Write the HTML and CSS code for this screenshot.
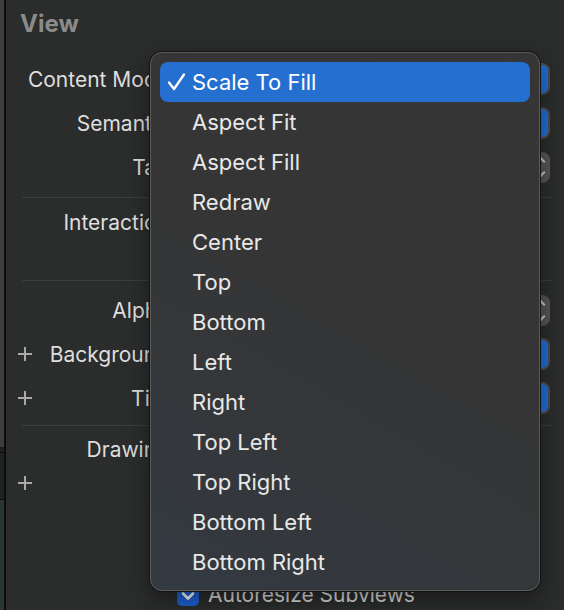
FILE: index.html
```html
<!DOCTYPE html>
<html>
<head>
<meta charset="utf-8">
<link rel="stylesheet" href="styles.css">
</head>
<body>
<div class="app">
  <div class="edge">
    <div class="edge-top"></div>
    <div class="edge-mid"></div>
    <div class="edge-bot"></div>
  </div>
  <div class="inspector">
    <div class="title">View</div>

    <div class="row"><div class="label">Content Mode</div><div class="control"><div class="popup"><div class="popup-arrow"></div></div></div></div>
    <div class="row"><div class="label">Semantic</div><div class="control"><div class="popup"><div class="popup-arrow"></div></div></div></div>
    <div class="row"><div class="label">Tag</div><div class="control"><div class="field"><div class="stepper"><span class="chev up"></span><span class="chev down"></span></div></div></div></div>

    <div class="sep"></div>

    <div class="block">
      <div class="row short"><div class="label">Interaction</div><div class="control"></div></div>
    </div>

    <div class="sep"></div>

    <div class="row tight"><div class="label">Alpha</div><div class="control"><div class="field"><div class="stepper"><span class="chev up"></span><span class="chev down"></span></div></div></div></div>
    <div class="row"><div class="label"><span class="plus"></span><span>Background</span></div><div class="control"><div class="popup"><div class="popup-arrow"></div></div></div></div>
    <div class="row"><div class="label"><span class="plus"></span><span>Tint</span></div><div class="control"><div class="popup"><div class="popup-arrow"></div></div></div></div>

    <div class="sep sep-small"></div>

    <div class="row drawing"><div class="label">Drawing</div><div class="control"></div></div>
    <div class="row plusrow"><div class="label"><span class="plus"></span><span></span></div><div class="control"></div></div>

    <div class="row autoresize"><div class="label"></div><div class="control"><span class="checkbox"><svg width="22" height="22" viewBox="0 0 22 22"><path d="M6 9.5 L11 14.5 L16 9.5" fill="none" stroke="#fff" stroke-width="2.6" stroke-linecap="round" stroke-linejoin="round"/></svg></span><span class="cb-text">Autoresize Subviews</span></div></div>
  </div>
</div>

<div class="menu">
  <div class="item selected"><span class="check"><svg width="20" height="20" viewBox="0 0 20 20"><path d="M2 10.5 L7 17 L17 2.5" fill="none" stroke="#fff" stroke-width="2.3" stroke-linecap="round" stroke-linejoin="round"/></svg></span><span>Scale To Fill</span></div>
  <div class="item"><span class="check"></span><span>Aspect Fit</span></div>
  <div class="item"><span class="check"></span><span>Aspect Fill</span></div>
  <div class="item"><span class="check"></span><span>Redraw</span></div>
  <div class="item"><span class="check"></span><span>Center</span></div>
  <div class="item"><span class="check"></span><span>Top</span></div>
  <div class="item"><span class="check"></span><span>Bottom</span></div>
  <div class="item"><span class="check"></span><span>Left</span></div>
  <div class="item"><span class="check"></span><span>Right</span></div>
  <div class="item"><span class="check"></span><span>Top Left</span></div>
  <div class="item"><span class="check"></span><span>Top Right</span></div>
  <div class="item"><span class="check"></span><span>Bottom Left</span></div>
  <div class="item"><span class="check"></span><span>Bottom Right</span></div>
</div>
</body>
</html>
```

FILE: styles.css
```css
* { box-sizing: border-box; }
html, body {
  margin: 0;
  padding: 0;
  width: 564px;
  height: 610px;
  overflow: hidden;
  background: #2b2c2c;
  font-family: "Inter", "Liberation Sans", sans-serif;
}
.app {
  display: flex;
  height: 610px;
}
.edge {
  width: 6px;
  border-right: 2px solid #0c0c0c;
  display: flex;
  flex-direction: column;
}
.edge-top { height: 447px; background: #3d3d3d; }
.edge-mid {
  height: 53px;
  background: #212322;
  border-top: 5px solid #1d1f1e;
  border-bottom: 1px solid #0c0c0c;
  box-shadow: inset 0 1px 0 #0c0c0c;
}
.edge-bot { flex: 1; background: #28382e; }

.inspector {
  flex: 1;
  padding: 0 14px 0 16px;
  display: flex;
  flex-direction: column;
}
.title {
  height: 48px;
  line-height: 48px;
  margin-left: -2px;
  margin-bottom: 9px;
  font-size: 24px;
  font-weight: 700;
  color: #8b8b8b;
}
.row {
  display: grid;
  grid-template-columns: 147px 1fr;
  column-gap: 6px;
  align-items: center;
  height: 44px;
}
.row.short { height: 32px; }
.row.tight { height: 43px; }
.row.drawing { height: 46px; }
.row.plusrow { height: 22px; }
.row.autoresize { margin-top: 88px; height: 22px; }
.label {
  display: flex;
  justify-content: space-between;
  align-items: center;
  text-align: right;
  font-size: 21px;
  color: #dedede;
  white-space: nowrap;
}
.label:not(:has(.plus)) { justify-content: flex-end; }
.plus {
  position: relative;
  width: 14px;
  height: 14px;
  margin-left: -4px;
  flex: none;
}
.plus::before, .plus::after {
  content: "";
  position: absolute;
  background: #a9a9a9;
}
.plus::before { left: 0; top: 6px; width: 14px; height: 2px; }
.plus::after { left: 6px; top: 0; width: 2px; height: 14px; }

.control {
  display: flex;
  align-items: center;
  height: 100%;
}
.popup {
  flex: 1;
  height: 32px;
  border-radius: 8px;
  background: #4f4f4f;
  padding: 2px;
  display: flex;
  justify-content: flex-end;
}
.popup-arrow {
  width: 24px;
  border-radius: 6px;
  background: #1f6fd8;
}
.field {
  flex: 1;
  height: 31px;
  border-radius: 8px;
  background: #3a3a3a;
  display: flex;
  justify-content: flex-end;
}
.stepper {
  width: 26px;
  border-radius: 8px;
  background: #555;
  display: flex;
  flex-direction: column;
  align-items: flex-end;
  justify-content: space-around;
  padding: 0 6px;
}
.chev {
  width: 7px;
  height: 7px;
  border-left: 2px solid #c8c8c8;
  border-top: 2px solid #c8c8c8;
}
.chev.up { transform: rotate(45deg); margin-top: 4px; }
.chev.down { transform: rotate(225deg); margin-bottom: 4px; }

.block { height: 66px; }
.sep {
  height: 1px;
  background: #3c3d3d;
  margin: 8px -2px 8px 0;
}
.sep-small { margin: 5px -2px 0 0; }

.checkbox {
  width: 22px;
  height: 22px;
  border-radius: 5px;
  background: #1f60d3;
  margin-left: 2px;
  flex: none;
}
.checkbox svg { display: block; }
.cb-text {
  margin-left: 9px;
  font-size: 21px;
  color: #d8d8d8;
  white-space: nowrap;
}

.menu {
  position: absolute;
  left: 150px;
  top: 52px;
  width: 390px;
  height: 539px;
  padding: 9px;
  border-radius: 12px;
  border: 1px solid #5a5a5a;
  box-shadow: 0 0 0 1px #141414, 0 8px 24px rgba(0,0,0,0.45);
  background: linear-gradient(30deg, #333a42 0%, #34373b 25%, #353535 55%, #363636 100%);
}
.item {
  height: 40px;
  border-radius: 8px;
  display: flex;
  align-items: center;
  font-size: 22px;
  color: #e8e8e8;
}
.item.selected {
  background: #256fd1;
  color: #fff;
}
.check {
  width: 32px;
  padding-left: 7px;
  display: flex;
  align-items: center;
  flex: none;
}
.check svg { display: block; }
```
